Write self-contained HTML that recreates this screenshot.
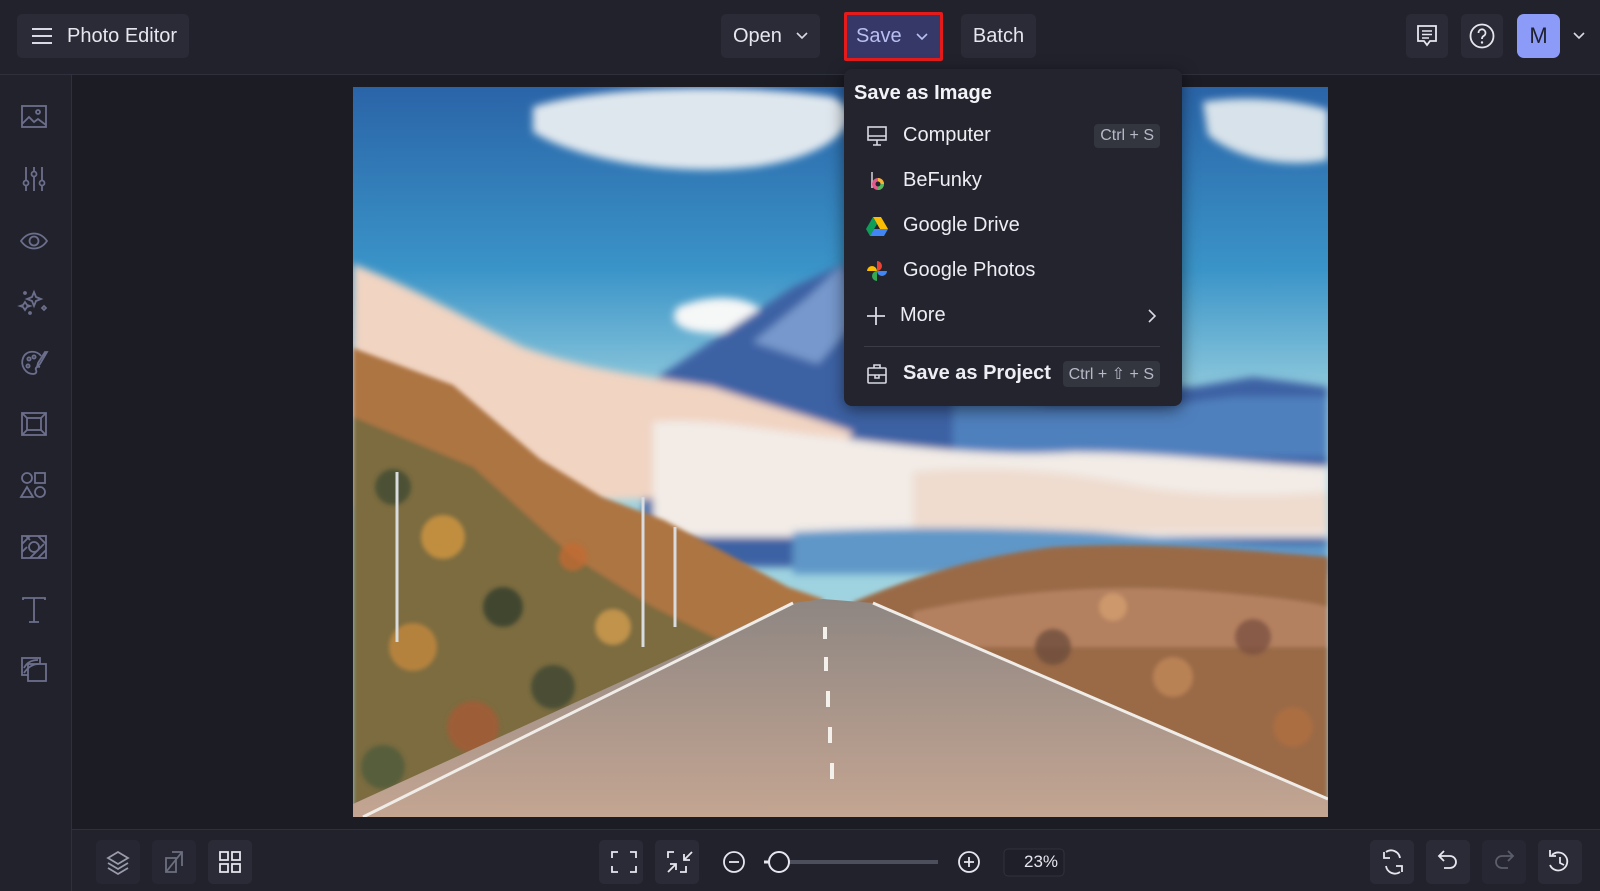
<!DOCTYPE html>
<html><head><meta charset="utf-8"><style>
*{box-sizing:border-box;margin:0;padding:0}
body{width:1600px;height:891px;background:#1b1c24;font-family:"Liberation Sans",sans-serif;color:#e8e9ef;position:relative;overflow:hidden}
.top{position:absolute;left:0;top:0;width:1600px;height:75px;background:#21222c;border-bottom:1px solid #2e303b}
.side{position:absolute;left:0;top:75px;width:72px;height:816px;background:#21222c;border-right:1px solid #2e303b}
.bot{position:absolute;left:72px;top:829px;width:1528px;height:62px;background:#21222c;border-top:1px solid #2e303b}
.btn{position:absolute;background:#2a2b36;border-radius:5px;display:flex;align-items:center;font-size:20px;color:#e6e7ee}
.ab{position:absolute}
svg{display:block}
.menu{position:absolute;left:844px;top:69px;width:338px;height:337px;background:#23242e;border-radius:8px;box-shadow:0 4px 16px rgba(0,0,0,.5)}
.mi{position:absolute;left:22px;display:flex;align-items:center;font-size:20px;color:#eceef3}
.kbd{position:absolute;right:22px;background:#33353f;border-radius:4px;color:#b7b9c6;font-size:16px;padding:3px 6px}
</style></head><body>
<div class="top"></div>
<div class="btn" style="left:17px;top:14px;width:172px;height:44px">
<svg style="margin-left:14px" width="22" height="20" viewBox="0 0 22 20"><path d="M1 3H21M1 10H21M1 17H21" stroke="#d8d9e2" stroke-width="2"/></svg>
<span style="margin-left:14px">Photo Editor</span></div>
<div class="btn" style="left:721px;top:14px;width:99px;height:44px"><span style="margin-left:12px">Open</span>
<svg style="margin-left:14px" width="12" height="8" viewBox="0 0 12 8"><path d="M1 1l5 5 5-5" stroke="#d8d9e2" stroke-width="1.6" fill="none"/></svg></div>
<div class="btn" style="left:844px;top:12px;width:99px;height:49px;background:#363867;border:3px solid #e51b1b;border-radius:2px;color:#b9bff2"><span style="margin-left:9px">Save</span>
<svg style="margin-left:14px" width="12" height="8" viewBox="0 0 12 8"><path d="M1 1l5 5 5-5" stroke="#b9bff2" stroke-width="1.6" fill="none"/></svg></div>
<div class="btn" style="left:961px;top:14px;width:75px;height:44px;justify-content:center">Batch</div>
<div class="btn" style="left:1406px;top:14px;width:42px;height:44px;justify-content:center"><svg width="22" height="24" viewBox="0 0 22 24"><path d="M2 2H20V17H14L11 21 8 17H2Z" stroke="#e6e7ee" stroke-width="1.8" fill="none"/><path d="M6 7H16M6 10.5H16M6 14H13" stroke="#e6e7ee" stroke-width="1.6"/></svg></div>
<div class="btn" style="left:1461px;top:14px;width:42px;height:44px;justify-content:center"><svg width="26" height="26" viewBox="0 0 26 26"><circle cx="13" cy="13" r="11.5" stroke="#e6e7ee" stroke-width="1.8" fill="none"/><path d="M9.5 10a3.5 3.5 0 1 1 5 3c-1.3.7-1.5 1.4-1.5 3" stroke="#e6e7ee" stroke-width="1.8" fill="none"/><circle cx="13" cy="19.5" r="1.2" fill="#e6e7ee"/></svg></div>
<div class="btn" style="left:1517px;top:14px;width:43px;height:44px;justify-content:center;background:#8c9bf8;color:#1f2130;font-size:22px;border-radius:7px">M</div>
<svg class="ab" style="left:1573px;top:32px" width="12" height="8" viewBox="0 0 12 8"><path d="M1 1l5 5 5-5" stroke="#d8d9e2" stroke-width="1.6" fill="none"/></svg>

<div class="side">
<svg width="72" height="816" viewBox="0 0 72 816" fill="none" stroke="#6c6f8c" stroke-width="1.8">
<g transform="translate(22,31)"><rect x="0" y="0" width="24" height="21"/><path d="M0 18l7-7 5 5 4-3 8 6"/><circle cx="16" cy="6" r="2"/></g>
<g transform="translate(22,92)"><path d="M4 0v24M12 0v24M20 0v24"/><circle cx="4" cy="16" r="2.5" fill="#21222c"/><circle cx="12" cy="7" r="2.5" fill="#21222c"/><circle cx="20" cy="16" r="2.5" fill="#21222c"/></g>
<g transform="translate(20,156)"><path d="M1 10C8 0 20 0 27 10 20 20 8 20 1 10Z"/><circle cx="14" cy="10" r="4.5"/></g>
<g transform="translate(20,214)"><path d="M14 3l2 5 5 2-5 2-2 5-2-5-5-2 5-2z"/><path d="M5 13l2 3 3 1-3 1-2 3-2-3-3-1 3-1z"/><circle cx="5" cy="4" r="1"/><circle cx="10" cy="24" r="1"/><path d="M24 17l2 2-2 2-2-2z"/></g>
<g transform="translate(21,275)"><path d="M20 6C16 0 5 0 2 8-1 16 5 24 12 24c3 0 4-2 3-4s1-4 4-3"/><circle cx="8" cy="9" r="1.6"/><circle cx="7" cy="16" r="1.6"/><circle cx="13" cy="7" r="1.6"/><path d="M26 2l-7 12-3 3 1-4 7-11z"/></g>
<g transform="translate(22,338)"><rect x="0" y="0" width="24" height="22"/><rect x="5" y="5" width="14" height="12"/><path d="M0 0l5 5M24 0l-5 5M0 22l5-5M24 22l-5-5"/></g>
<g transform="translate(21,397)"><circle cx="6" cy="6" r="5"/><rect x="14" y="1" width="10" height="10"/><path d="M6 15l6 10H0z"/><circle cx="19" cy="20" r="5"/></g>
<g transform="translate(22,461)"><rect x="0" y="0" width="24" height="22"/><circle cx="12" cy="11" r="5"/><path d="M0 8l8-8M0 16l5-5M8 22l14-14M16 22l8-8M4 0l4 4M16 0l8 8"/></g>
<g transform="translate(22,523)"><path d="M1 2V0H23V2M12 0V24M7 24H17"/></g>
<g transform="translate(22,583)"><rect x="0" y="0" width="18" height="17"/><rect x="6" y="6" width="18" height="17" fill="#21222c"/><path d="M2 10c3-6 8-8 14-8M2 15c4-6 9-9 15-9"/></g>
</svg></div>

<svg class="ab" style="left:353px;top:87px" width="975" height="730" viewBox="0 0 975 730">
<defs>
<linearGradient id="sky" x1="0" y1="0" x2="0" y2="1"><stop offset="0" stop-color="#2a64a8"/><stop offset=".25" stop-color="#3a94c8"/><stop offset=".45" stop-color="#9fd3e0"/></linearGradient>
<linearGradient id="road" x1="0" y1="0" x2="0" y2="1"><stop offset="0" stop-color="#8e8682"/><stop offset="1" stop-color="#c4a592"/></linearGradient>
<filter id="b"><feGaussianBlur stdDeviation="4"/></filter>
<filter id="b2"><feGaussianBlur stdDeviation="2"/></filter>
</defs>
<rect width="975" height="730" fill="url(#sky)"/>
<g filter="url(#b)">
<path d="M180 20C240 0 380 -5 480 10 520 30 480 70 400 80 310 90 220 70 180 45Z" fill="#dfe7ee"/>
<path d="M850 15c50-8 100 0 125 8v50c-40 8-90 0-120-25z" fill="#d7e2ea"/>
<path d="M325 220c30-12 60-12 80 0 5 15-25 30-60 25-25-4-28-15-20-25z" fill="#f6f7f7"/>
<path d="M290 300L380 240 440 200 490 177 540 200 640 260 740 300 840 300 900 290 940 295 975 300V480H290Z" fill="#3d62a4"/>
<path d="M400 255l55-45 35-33 15 55-40 45z" fill="#7698cc"/>
<path d="M600 300l100 20 100 0 80 -10 95 0v60H600z" fill="#4f80be"/>
<path d="M0 177C60 200 110 230 170 260 240 285 300 290 360 300 420 320 460 330 500 345 480 380 420 400 360 410L0 420Z" fill="#f1d4c2"/>
<path d="M300 335C360 330 420 345 480 350 560 360 640 370 720 365 800 365 880 375 975 380V450H300Z" fill="#f2ebe6"/>
<path d="M560 385c80-8 160 0 230 15 60 10 130 10 185 5v40H560z" fill="#efdccf"/>
<path d="M440 445c100-5 200-5 300 0 100 8 180 15 235 12v30H440z" fill="#5f97c8"/>
</g>
<g filter="url(#b2)">
<path d="M0 261L100 298 187 372 249 410 311 433 373 466 435 500 470 512 470 730H0Z" fill="#ad7442"/>
<path d="M0 330L120 380 220 470 300 520 380 560 450 600 450 730H0Z" fill="#7c6c40"/>
<path d="M500 515C560 490 620 470 700 460 780 455 860 460 975 470V730H500Z" fill="#9a6a46"/>
<path d="M560 525C650 505 760 495 860 505 920 510 960 515 975 520V560H560Z" fill="#b48160"/>
</g>
<g filter="url(#b2)" opacity=".75">
<circle cx="40" cy="400" r="18" fill="#3e4a30"/><circle cx="90" cy="450" r="22" fill="#d89a40"/><circle cx="150" cy="520" r="20" fill="#2f3a2c"/><circle cx="60" cy="560" r="24" fill="#c98a3c"/><circle cx="200" cy="600" r="22" fill="#3a4530"/><circle cx="260" cy="540" r="18" fill="#d8a050"/><circle cx="120" cy="640" r="26" fill="#a85a35"/><circle cx="30" cy="680" r="22" fill="#4b5a3a"/><circle cx="320" cy="620" r="16" fill="#b8a050"/><circle cx="220" cy="470" r="14" fill="#c46a30"/><circle cx="380" cy="590" r="14" fill="#3a4230"/>
<circle cx="700" cy="560" r="18" fill="#6b4c3a"/><circle cx="820" cy="590" r="20" fill="#c48a5a"/><circle cx="900" cy="550" r="18" fill="#7a5040"/><circle cx="760" cy="520" r="14" fill="#d4a070"/><circle cx="940" cy="640" r="20" fill="#b07040"/>
</g>
<path d="M470 512L440 516 0 717V730H975V712L520 516Z" fill="url(#road)"/>
<path d="M440 516L10 730M520 516L975 712" stroke="#f0ece8" stroke-width="3"/>
<path d="M472 540v12M473 570v14M475 604v16M477 640v16M479 676v16" stroke="#f4f0ec" stroke-width="4"/>
<path d="M44 385v170M290 410v150M322 440v100" stroke="#d8dcdf" stroke-width="3"/>
</svg>

<div class="menu">
<div style="position:absolute;left:10px;top:13px;font-size:20px;font-weight:bold;color:#f2f3f7">Save as Image</div>
<div class="mi" style="top:55px"><svg width="22" height="22" viewBox="0 0 22 22" fill="none" stroke="#d8d9e2" stroke-width="1.6"><rect x="2" y="2" width="18" height="13"/><path d="M2 11H20M11 15v5M7 20H15"/></svg><span style="margin-left:15px">Computer</span></div>
<div class="kbd" style="top:55px">Ctrl + S</div>
<div class="mi" style="top:100px"><svg width="22" height="22" viewBox="0 0 22 22"><path d="M6 2v16" stroke="#ccc" stroke-width="1.6"/><circle cx="12" cy="14" r="6" fill="#e25a8c"/><path d="M12 8a6 6 0 0 1 6 6h-6z" fill="#f0b63c"/><path d="M12 14h6a6 6 0 0 1-6 6z" fill="#56b85a"/><circle cx="12" cy="14" r="2.5" fill="#23242e"/></svg><span style="margin-left:15px">BeFunky</span></div>
<div class="mi" style="top:145px"><svg width="22" height="20" viewBox="0 0 22 20"><path d="M7 1h8l7 12h-8z" fill="#fbbc04"/><path d="M7 1L0 13l4 7 7-12z" fill="#0f9d58"/><path d="M4 20h14l4-7H8z" fill="#4285f4"/></svg><span style="margin-left:15px">Google Drive</span></div>
<div class="mi" style="top:190px"><svg width="22" height="22" viewBox="0 0 22 22"><path d="M11 11V1a5 5 0 0 1 0 10z" fill="#ea4335"/><path d="M11 11H21a5 5 0 0 1-10 0z" fill="#4285f4"/><path d="M11 11V21a5 5 0 0 1 0-10z" fill="#34a853"/><path d="M11 11H1a5 5 0 0 1 10 0z" fill="#fbbc04"/></svg><span style="margin-left:15px">Google Photos</span></div>
<div class="mi" style="top:235px"><svg width="20" height="20" viewBox="0 0 20 20"><path d="M10 1v18M1 10h18" stroke="#d8d9e2" stroke-width="1.8"/></svg><span style="margin-left:14px">More</span></div>
<svg class="ab" style="right:26px;top:240px" width="8" height="14" viewBox="0 0 8 14"><path d="M1 1l6 6-6 6" stroke="#d8d9e2" stroke-width="1.6" fill="none"/></svg>
<div style="position:absolute;left:20px;right:22px;top:277px;height:1px;background:#3a3c48"></div>
<div class="mi" style="top:293px;font-weight:bold"><svg width="22" height="22" viewBox="0 0 22 22" fill="none" stroke="#d8d9e2" stroke-width="1.6"><rect x="2" y="5" width="18" height="15" rx="1"/><path d="M8 5V2h6v3M2 12h18M9 12v3h4v-3"/></svg><span style="margin-left:15px">Save as Project</span></div>
<div class="kbd" style="top:292px">Ctrl + ⇧ + S</div>
</div>

<div class="bot"></div>
<svg class="ab" style="left:96px;top:840px" width="1504" height="44" viewBox="96 840 1504 44" fill="none" stroke="#9a9cab" stroke-width="1.8">
<rect x="96" y="840" width="44" height="44" rx="5" fill="#262733" stroke="none"/>
<rect x="152" y="840" width="44" height="44" rx="5" fill="#262733" stroke="none"/>
<rect x="208" y="840" width="44" height="44" rx="5" fill="#2a2b36" stroke="none"/>
<rect x="599" y="840" width="44" height="44" rx="5" fill="#2a2b36" stroke="none"/>
<rect x="655" y="840" width="44" height="44" rx="5" fill="#2a2b36" stroke="none"/>
<rect x="1004" y="849" width="60" height="27" rx="4" fill="#1e1f28" stroke="#30323d" stroke-width="1"/>
<rect x="1370" y="840" width="44" height="44" rx="5" fill="#2a2b36" stroke="none"/>
<rect x="1426" y="840" width="44" height="44" rx="5" fill="#2a2b36" stroke="none"/>
<rect x="1482" y="840" width="44" height="44" rx="5" fill="#262733" stroke="none"/>
<rect x="1538" y="840" width="44" height="44" rx="5" fill="#2a2b36" stroke="none"/>
<path d="M118 852l-10 6 10 6 10-6zM108 863l10 6 10-6M108 868l10 6 10-6"/>
<path d="M166 858h10v14h-10zM172 852h10v14" stroke="#6c6f80"/><path d="M166 872l16-20" stroke="#6c6f80"/>
<path d="M220 852h8v8h-8zM232 852h8v8h-8zM220 864h8v8h-8zM232 864h8v8h-8z" stroke="#e6e7ee"/>
<path d="M612 858v-6h6M630 852h6v6M636 866v6h-6M618 872h-6v-6" stroke="#e6e7ee"/>
<path d="M668 858v-6h6M686 866v6h-6M692 852l-8 8M684 854v6h6M668 872l8-8M670 864h6v6" stroke="#e6e7ee"/>
<circle cx="734" cy="862" r="10" stroke="#e6e7ee"/><path d="M729 862h10" stroke="#e6e7ee"/>
<path d="M788 862h150" stroke="#4d4f5d" stroke-width="4"/><path d="M764 862h12" stroke="#e6e7ee" stroke-width="3"/>
<circle cx="779" cy="862" r="10" fill="#1e1f28" stroke="#e6e7ee" stroke-width="2"/>
<circle cx="969" cy="862" r="10" stroke="#e6e7ee"/><path d="M964 862h10M969 857v10" stroke="#e6e7ee"/>
<path d="M1386 866a9 9 0 0 0 14 6M1400 858a9 9 0 0 0-14-6M1384 852v6h6M1402 872v-6h-6" stroke="#e6e7ee"/>
<path d="M1440 856h10a6 6 0 0 1 0 12h-6M1444 851l-5 5 5 5" stroke="#e6e7ee"/>
<path d="M1512 856h-10a6 6 0 0 0 0 12h6M1508 851l5 5-5 5" stroke="#5b5d6b"/>
<path d="M1552 855a9 9 0 1 1 -2 10M1550 850v6h6M1560 857v6l4 2" stroke="#e6e7ee"/>
</svg>
<div class="ab" style="left:1024px;top:852px;font-size:17px;color:#e6e7ee">23%</div>
</body></html>
